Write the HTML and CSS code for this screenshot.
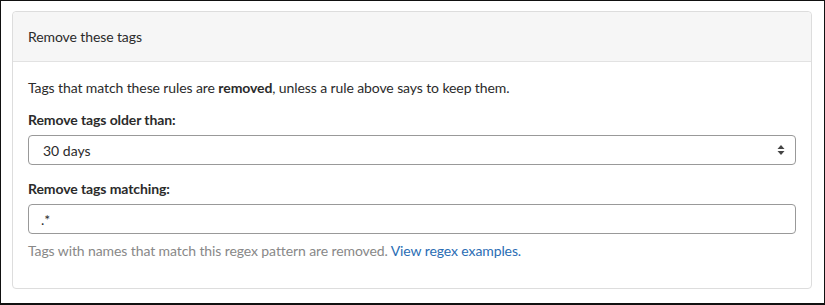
FILE: index.html
```html
<!DOCTYPE html>
<html lang="en">
<head>
    <meta charset="UTF-8">
    <meta name="viewport" content="width=device-width, initial-scale=1.0">
    <title>Tag cleanup</title>
    <link rel="stylesheet" href="styles.css">
</head>
<body>

    <div class="frame">
        <div class="panel">
            <div class="panel-heading">Remove these tags</div>

            <div class="panel-body">
                <p class="intro">Tags that match these rules are <strong>removed</strong>, unless a rule above says to keep them.</p>

                <!-- Age rule -->
                <label for="olderThan">Remove tags older than:</label>
                <div class="select-wrap">
                    <select id="olderThan" class="form-control">
                        <option>7 days</option>
                        <option selected>30 days</option>
                        <option>90 days</option>
                    </select>
                    <svg class="select-caret" width="8" height="12" viewBox="0 0 8 12">
                        <path d="M4 1 L7.5 5 H0.5 Z" fill="#444"/>
                        <path d="M4 11 L7.5 7 H0.5 Z" fill="#444"/>
                    </svg>
                </div>

                <!-- Name rule -->
                <label for="matching">Remove tags matching:</label>
                <input type="text" id="matching" class="form-control" value=".*">
                <p class="help">Tags with names that match this regex pattern are removed. <a href="#">View regex examples.</a></p>
            </div>
        </div>
    </div>

</body>
</html>
```

FILE: styles.css
```css
html, body {
    margin: 0;
    padding: 0;
    background-color: #fff;
}

body {
    font-family: 'Lato', sans-serif;
    font-size: 14px;
    line-height: 20px;
    letter-spacing: -0.1px;
    color: #2b2b2b;
}

.frame {
    box-sizing: border-box;
    width: 825px;
    height: 305px;
    border: 1px solid #111;
    border-bottom-width: 2px;
    padding: 10px 12px 0 11px;
}

.panel {
    border: 1px solid #ddd;
    border-radius: 4px;
}

.panel-heading {
    padding: 15px 15px 14px;
    background-color: #f6f6f6;
    border-bottom: 1px solid #e2e2e2;
    border-radius: 4px 4px 0 0;
}

.panel-body {
    padding: 16px 15px 27px;
}

p {
    margin: 0;
}

.intro {
    margin-bottom: 12px;
}

label {
    display: block;
    font-weight: bold;
    margin-bottom: 5px;
}

.form-control {
    display: block;
    box-sizing: border-box;
    width: 100%;
    height: 30px;
    padding: 0 12px;
    border: 1px solid #999;
    border-radius: 4px;
    background-color: #fff;
    font-family: inherit;
    font-size: 14px;
    color: #2b2b2b;
    margin-bottom: 14px;
}

select.form-control {
    appearance: none;
    -webkit-appearance: none;
    padding-left: 14px;
}

.select-wrap {
    position: relative;
}

/* Up/down caret drawn over the select */
.select-caret {
    position: absolute;
    right: 11px;
    top: 9px;
    pointer-events: none;
}

input.form-control {
    margin-bottom: 7px;
}

.help {
    color: #888;
}

.help a {
    color: #2a6db4;
    text-decoration: none;
}
```
